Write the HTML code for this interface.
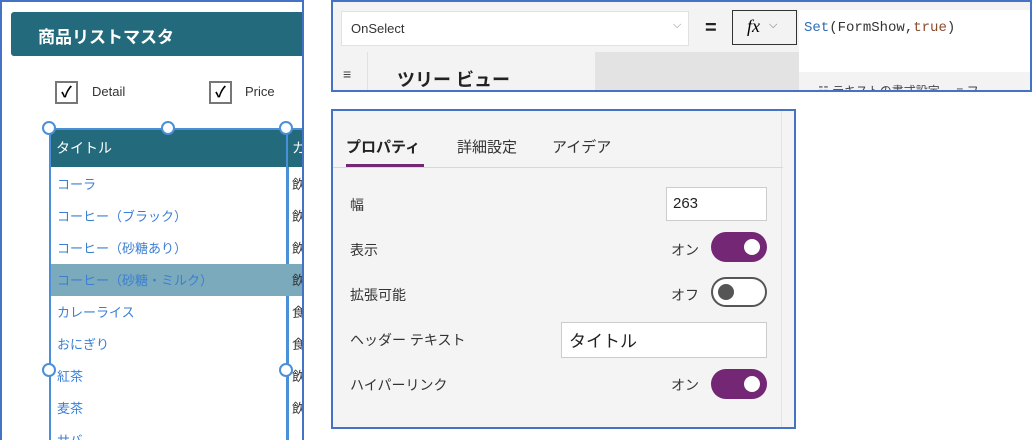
<!DOCTYPE html>
<html><head><meta charset="utf-8"><style>
*{margin:0;padding:0;box-sizing:border-box}
html,body{width:1032px;height:440px;overflow:hidden}
body{background:#fff;position:relative;font-family:"Liberation Sans","Noto Sans CJK JP",sans-serif}
.a{position:absolute}
.blue{color:#3a7fd3;font-size:13px;white-space:nowrap;line-height:16px}
.lbl{font-size:14px;color:#333;white-space:nowrap}
.h{width:14px;height:14px;border:2px solid #4a90d9;border-radius:50%;background:#fff}
.tog{width:56px;height:30px;border-radius:15px;background:#742774}
.tog i{position:absolute;right:7px;top:7px;width:16px;height:16px;border-radius:50%;background:#fff}
</style></head><body>
<div class="a" style="left:0;top:0;width:304px;height:440px;border:2px solid #4472c4;border-bottom:none;overflow:hidden">
 <div class="a" style="left:9px;top:10px;width:300px;height:44px;background:#236b7c;border-radius:3px"></div>
 <div class="a" style="left:36px;top:21px;color:#fff;font-weight:bold;font-size:17px">商品リストマスタ</div>
 <div class="a" style="left:53px;top:79px;width:23px;height:23px;border:2px solid #777;font-size:15px;text-align:center;line-height:19px;font-weight:bold">✓</div>
 <div class="a lbl" style="left:90px;top:82px;font-size:13px">Detail</div>
 <div class="a" style="left:207px;top:79px;width:23px;height:23px;border:2px solid #777;font-size:15px;text-align:center;line-height:19px;font-weight:bold">✓</div>
 <div class="a lbl" style="left:243px;top:82px;font-size:13px">Price</div>
 <div class="a" style="left:47px;top:126px;width:240px;height:320px;border-left:2px solid #4a90d9;border-right:2px solid #4a90d9"></div>
 <div class="a" style="left:47px;top:126px;width:260px;height:2px;background:#4a90d9"></div>
 <div class="a" style="left:49px;top:128px;width:260px;height:37px;background:#236b7c"></div>
 <div class="a" style="left:284px;top:128px;width:2px;height:320px;background:#4a90d9"></div>
 <div class="a" style="left:54px;top:137px;color:#fff;font-size:14px;line-height:18px">タイトル</div>
 <div class="a" style="left:290px;top:137px;color:#fff;font-size:14px;line-height:18px">カ</div>
 <div class="a" style="left:49px;top:262px;width:260px;height:32px;background:#7aaabb"></div>
 <div class="a blue" style="left:55px;top:175px">コーラ</div>
 <div class="a blue" style="left:55px;top:207px">コーヒー（ブラック）</div>
 <div class="a blue" style="left:55px;top:239px">コーヒー（砂糖あり）</div>
 <div class="a blue" style="left:55px;top:271px">コーヒー（砂糖・ミルク）</div>
 <div class="a blue" style="left:55px;top:303px">カレーライス</div>
 <div class="a blue" style="left:55px;top:335px">おにぎり</div>
 <div class="a blue" style="left:55px;top:367px">紅茶</div>
 <div class="a blue" style="left:55px;top:399px">麦茶</div>
 <div class="a blue" style="left:55px;top:431px">サバ</div>
 <div class="a" style="left:290px;top:167px;font-size:13px;line-height:32px;color:#333">飲<br>飲<br>飲<br>飲<br>食<br>食<br>飲<br>飲</div>
 <div class="a h" style="left:40px;top:119px"></div>
 <div class="a h" style="left:159px;top:119px"></div>
 <div class="a h" style="left:277px;top:119px"></div>
 <div class="a h" style="left:40px;top:361px"></div>
 <div class="a h" style="left:277px;top:361px"></div>
</div>
<div class="a" style="left:331px;top:0;width:701px;height:92px;border:2px solid #4472c4;background:#f3f3f3;overflow:hidden">
 <div class="a" style="left:8px;top:9px;width:348px;height:35px;background:#fff;border:1px solid #e1e1e1"></div>
 <div class="a" style="left:18px;top:19px;font-size:13px;color:#333">OnSelect</div>
 <div class="a" style="left:340px;top:17px;font-size:11px;color:#888">⌵</div>
 <div class="a" style="left:372px;top:15px;font-size:20px;font-weight:bold;color:#222">=</div>
 <div class="a" style="left:399px;top:8px;width:65px;height:35px;border:1px solid #333;background:#f3f3f3"></div>
 <div class="a" style="left:414px;top:14px;font-family:'Liberation Serif',serif;font-style:italic;font-size:18px">fx</div>
 <div class="a" style="left:436px;top:17px;font-size:11px;color:#666">⌵</div>
 <div class="a" style="left:466px;top:8px;width:240px;height:62px;background:#fff"></div>
 <div class="a" style="left:471px;top:18px;font-family:'Liberation Mono',monospace;font-size:14px;color:#333"><span style="color:#2f6db5">Set</span>(FormShow,<span style="color:#8a4b2b">true</span>)</div>
 <div class="a" style="left:10px;top:64px;font-size:14px;color:#444">≡</div>
 <div class="a" style="left:34px;top:50px;width:228px;height:44px;background:#f3f3f3;border-left:1px solid #e1e1e1"></div>
 <div class="a" style="left:64px;top:64px;font-size:18px;font-weight:bold;color:#222">ツリー ビュー</div>
 <div class="a" style="left:317px;top:63px;font-size:18px;color:#444">✕</div>
 <div class="a" style="left:262px;top:50px;width:204px;height:44px;background:#e3e3e3"></div>
 <div class="a" style="left:466px;top:70px;width:240px;height:24px;background:#f3f3f3"></div>
 <div class="a" style="left:485px;top:80px;font-size:12px;color:#444;white-space:nowrap">☷ テキストの書式設定 &nbsp;&nbsp;&nbsp;&nbsp;≡ フ</div>
</div>
<div class="a" style="left:331px;top:109px;width:465px;height:320px;border:2px solid #4472c4;background:#f4f4f4;overflow:hidden">
 <div class="a" style="left:448px;top:0;width:1px;height:320px;background:#e3e3e3"></div>
 <div class="a" style="left:13px;top:25px;font-size:15px;font-weight:bold;color:#222">プロパティ</div>
 <div class="a" style="left:124px;top:25px;font-size:15px;color:#333">詳細設定</div>
 <div class="a" style="left:219px;top:25px;font-size:15px;color:#333">アイデア</div>
 <div class="a" style="left:13px;top:53px;width:78px;height:3px;background:#742774"></div>
 <div class="a" style="left:0;top:56px;width:450px;height:1px;background:#d8d8d8"></div>
 <div class="a lbl" style="left:17px;top:84px">幅</div>
 <div class="a lbl" style="left:17px;top:129px">表示</div>
 <div class="a lbl" style="left:17px;top:174px">拡張可能</div>
 <div class="a lbl" style="left:17px;top:219px">ヘッダー テキスト</div>
 <div class="a lbl" style="left:17px;top:264px">ハイパーリンク</div>
 <div class="a" style="left:333px;top:76px;width:101px;height:34px;background:#fff;border:1px solid #ccc"></div>
 <div class="a" style="left:340px;top:84px;font-size:15px;color:#222">263</div>
 <div class="a lbl" style="left:338px;top:129px">オン</div>
 <div class="a tog" style="left:378px;top:121px"><i></i></div>
 <div class="a lbl" style="left:338px;top:174px">オフ</div>
 <div class="a" style="left:378px;top:166px;width:56px;height:30px;border-radius:15px;border:2px solid #555;background:#fff"><i style="position:absolute;left:5px;top:5px;width:16px;height:16px;border-radius:50%;background:#555"></i></div>
 <div class="a" style="left:228px;top:211px;width:206px;height:36px;background:#fff;border:1px solid #ccc"></div>
 <div class="a" style="left:236px;top:216px;font-size:17px;color:#222">タイトル</div>
 <div class="a lbl" style="left:338px;top:264px">オン</div>
 <div class="a tog" style="left:378px;top:258px"><i></i></div>
</div>
</body></html>
